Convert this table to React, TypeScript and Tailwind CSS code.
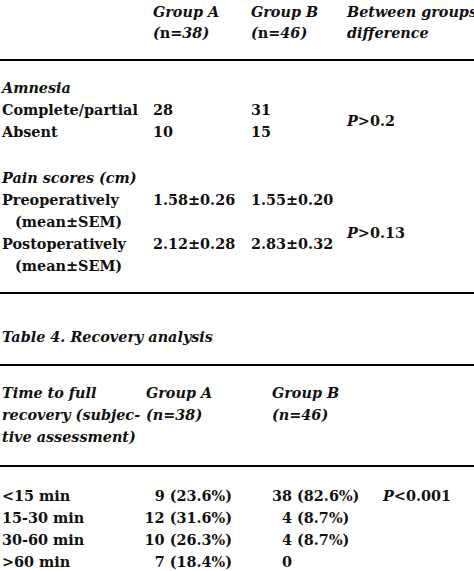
import React from "react";

function N({ v }: { v: string }) {
  // "(n=38)" with the n upright and the rest italic, as set in the print
  return (
    <span>
      <span className="italic">(</span>n<span className="italic">={v})</span>
    </span>
  );
}

function P({ op, v }: { op: string; v: string }) {
  return (
    <span>
      <span className="italic">P</span>
      {op}
      {v}
    </span>
  );
}

const Rule = ({ className = "" }: { className?: string }) => (
  <div className={`h-[2px] bg-black ${className}`} />
);

const recovery = [
  { t: "<15 min", a: "9 (23.6%)", b: "38 (82.6%)", p: true },
  { t: "15-30 min", a: "12 (31.6%)", b: "\u20074 (8.7%)", p: false },
  { t: "30-60 min", a: "10 (26.3%)", b: "\u20074 (8.7%)", p: false },
  { t: ">60 min", a: "7 (18.4%)", b: "\u20070", p: false },
];

export default function App() {
  return (
    <div className="w-[474px] h-[571px] overflow-hidden bg-white text-[#111] font-['DejaVu_Serif',serif] font-bold text-[14.4px]">
      {/* Table 3 header */}
      <div className="grid grid-cols-[153px_98px_96px_1fr] leading-[21px] pt-px">
        <div />
        <div className="italic">Group A</div>
        <div className="italic">Group B</div>
        <div className="italic whitespace-nowrap">Between groups</div>
        <div />
        <N v="38" />
        <N v="46" />
        <div className="italic">difference</div>
      </div>
      <Rule className="mt-[16px]" />

      {/* Table 3 body */}
      <div className="grid grid-cols-[151px_98px_96px_1fr] leading-[22px] pl-[2px] mt-[16px]">
        <div className="italic col-span-4">Amnesia</div>
        <div className="whitespace-nowrap">Complete/partial</div>
        <div>28</div>
        <div>31</div>
        <div className="row-span-2 flex items-center">
          <P op=">" v="0.2" />
        </div>
        <div>Absent</div>
        <div>10</div>
        <div>15</div>

        <div className="italic col-span-4 mt-[24px]">Pain scores (cm)</div>
        <div>Preoperatively</div>
        <div>1.58±0.26</div>
        <div>1.55±0.20</div>
        <div className="row-span-4 flex items-center">
          <P op=">" v="0.13" />
        </div>
        <div className="pl-[13px] col-span-3">(mean±SEM)</div>
        <div>Postoperatively</div>
        <div>2.12±0.28</div>
        <div>2.83±0.32</div>
        <div className="pl-[13px] col-span-3">(mean±SEM)</div>
      </div>
      <Rule className="mt-[15px]" />

      {/* Table 4 caption */}
      <div className="italic pl-[2px] leading-[22px] mt-[32px]">
        Table 4. Recovery analysis
      </div>
      <Rule className="mt-[16px]" />

      {/* Table 4 header */}
      <div className="grid grid-cols-[144px_126px_1fr] leading-[22px] pl-[2px] mt-[16px] italic">
        <div>Time to full</div>
        <div>Group A</div>
        <div>Group B</div>
        <div className="whitespace-nowrap">recovery (subjec-</div>
        <N v="38" />
        <N v="46" />
        <div className="whitespace-nowrap col-span-3">tive assessment)</div>
      </div>
      <Rule className="mt-[17px]" />

      {/* Table 4 body */}
      <div className="grid grid-cols-[120px_110px_40px_111px_1fr] leading-[22px] pl-[2px] mt-[18px]">
        {recovery.map((r) => (
          <React.Fragment key={r.t}>
            <div>{r.t}</div>
            <div className="text-right whitespace-nowrap">{r.a}</div>
            <div />
            <div className="whitespace-nowrap">{r.b}</div>
            <div className="whitespace-nowrap">{r.p ? <P op="<" v="0.001" /> : null}</div>
          </React.Fragment>
        ))}
      </div>
    </div>
  );
}
